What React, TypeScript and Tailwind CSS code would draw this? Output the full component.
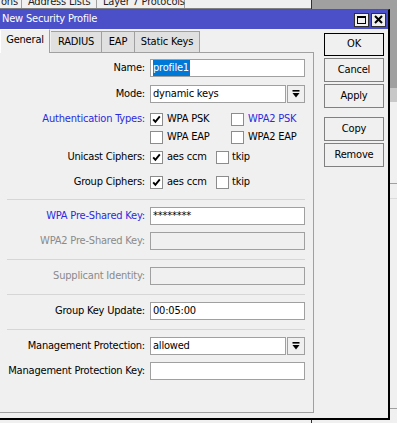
import React from 'react';

const labelCls = "w-[146px] shrink-0 text-right whitespace-nowrap";

const Check: React.FC<{on?: boolean}> = ({on}) => (
  <div className="w-[13px] h-[13px] shrink-0 border border-[#8c8c8c] bg-white flex items-center justify-center">
    {on && (
      <svg width="9" height="9" viewBox="0 0 9 9">
        <polyline points="1.2,4.3 3.4,6.8 7.8,1.3" fill="none" stroke="#000" strokeWidth="1.9" />
      </svg>
    )}
  </div>
);

const DropArrow = () => (
  <svg width="8" height="8" viewBox="0 0 8 8">
    <rect x="0.5" y="0" width="7" height="1.6" fill="#000" />
    <polygon points="0.5,3 7.5,3 4,7.5" fill="#000" />
  </svg>
);

const Row: React.FC<{label: string; color?: string; mt: string; children: React.ReactNode}> = ({label, color, mt, children}) => (
  <div className={`flex items-center h-[18px] ${mt}`}>
    <div className={`${labelCls} ${color ?? ""}`}>{label}</div>
    <div className="ml-[5px] flex items-center">{children}</div>
  </div>
);

const TextBox: React.FC<{value?: React.ReactNode; disabled?: boolean; w?: string}> = ({value, disabled, w}) => (
  <div className={`${w ?? "w-[155px]"} h-[18px] border border-[#a0a0a0] flex items-center pl-[2px] whitespace-nowrap ${disabled ? "bg-[#f0f0f0]" : "bg-white"}`}>
    {value}
  </div>
);

const Select: React.FC<{value: string}> = ({value}) => (
  <div className="flex">
    <TextBox value={value} w="w-[136px]" />
    <div className="ml-px w-[18px] h-[18px] border border-[#a0a0a0] bg-[#f0f0f0] flex items-center justify-center">
      <DropArrow />
    </div>
  </div>
);

const Sep: React.FC<{mt: string}> = ({mt}) => (
  <div className={`ml-[8px] w-[298px] border-t border-[#d6d6d6] ${mt}`} />
);

const Btn: React.FC<{label: string; mt: string; main?: boolean}> = ({label, mt, main}) => (
  <div className={`w-[60px] flex items-center justify-center ${mt} ${main ? "h-[23px] border border-black" : "h-[24px] border border-[#808080]"}`}>
    {label}
  </div>
);

export default function App() {
  return (
    <div className="relative w-[397px] h-[423px] overflow-hidden bg-[#f0f0f0] text-[11px] tracking-[-0.2px] text-black font-['DejaVu_Sans_Condensed','DejaVu_Sans',sans-serif]">
      {/* window behind */}
      <div className="flex h-full">
        <div className="w-[311px] shrink-0">
          <div className="flex h-[9px] overflow-hidden border-b border-[#808080] text-[#222]">
            <div className="w-[22px] border-r border-[#a0a0a0] leading-[11px] -mt-[4px] pl-[1px]">ons</div>
            <div className="w-[75px] border-r border-[#a0a0a0] leading-[11px] -mt-[4px] pl-[6px]">Address Lists</div>
            <div className="w-[88px] border-r border-[#a0a0a0] leading-[11px] -mt-[4px] pl-[6px] whitespace-nowrap">Layer 7 Protocols</div>
          </div>
        </div>
        <div className="flex-1 flex flex-col border-l border-[#303030]">
          <div className="h-[88px] bg-[#a0a0a0]" />
          <div className="h-[14px] bg-[#c8c8c8]" />
          <div className="h-[81px]" />
          <div className="border-t border-[#a0a0a0] h-[15px]" />
          <div className="border-t border-[#dcdcdc] h-[210px]" />
          <div className="border-t border-[#a0a0a0] flex-1" />
        </div>
      </div>

      {/* dialog window */}
      <div className="absolute left-[-4px] top-[9px] w-[394px] h-[411px] bg-[#f0f0f0] border-t border-[#5a5a5a] border-r-2 border-b-2 border-r-black border-b-black flex flex-col">
        <div className="h-[19px] bg-[#4b4fc8] flex items-center justify-between pl-[6px] pr-[2px]">
          <span className="text-white text-[11px]">New Security Profile</span>
          <div className="flex gap-[2px]">
            <div className="w-[15px] h-[14px] bg-[#f0f0f0] border border-[#303030] flex items-center justify-center">
              <div className="w-[9px] h-[8px] border border-black border-t-2" />
            </div>
            <div className="w-[15px] h-[14px] bg-[#f0f0f0] border border-[#303030] flex items-center justify-center">
              <svg width="9" height="9" viewBox="0 0 9 9">
                <path d="M1 1 L8 8 M8 1 L1 8" stroke="#000" strokeWidth="2" />
              </svg>
            </div>
          </div>
        </div>

        <div className="flex flex-1">
          {/* tabs + panel */}
          <div className="ml-[2px] w-[316px] flex flex-col">
            <div className="flex items-end h-[23px] ml-[2px]">
              <div className="relative z-10 w-[50px] h-[24px] -mb-px bg-[#f0f0f0] border-t border-l border-r border-t-white border-l-white border-r-[#a0a0a0] flex items-center justify-center pb-[2px]">General</div>
              <div className="ml-px w-[51px] h-[21px] bg-[#e0e0e0] border-t border-r border-[#a0a0a0] flex items-center justify-center">RADIUS</div>
              <div className="w-[33px] h-[21px] bg-[#e0e0e0] border-t border-r border-[#a0a0a0] flex items-center justify-center">EAP</div>
              <div className="w-[65px] h-[21px] bg-[#e0e0e0] border-t border-r border-[#a0a0a0] flex items-center justify-center">Static Keys</div>
            </div>
            <div className="h-[361px] border border-[#a0a0a0] flex flex-col">
              <Row label="Name:" mt="mt-[6px]">
                <TextBox value={<span className="bg-[#0078d7] text-white pr-[1px]">profile1</span>} />
              </Row>
              <Row label="Mode:" mt="mt-[8px]">
                <Select value="dynamic keys" />
              </Row>
              <Row label="Authentication Types:" color="text-[#2b2bde]" mt="mt-[7px]">
                <div className="flex items-center w-[81px]"><Check on /><span className="ml-[4px]">WPA PSK</span></div>
                <div className="flex items-center"><Check /><span className="ml-[4px] text-[#2b2bde]">WPA2 PSK</span></div>
              </Row>
              <Row label="" mt="mt-0">
                <div className="flex items-center w-[81px]"><Check /><span className="ml-[4px]">WPA EAP</span></div>
                <div className="flex items-center"><Check /><span className="ml-[4px]">WPA2 EAP</span></div>
              </Row>
              <Row label="Unicast Ciphers:" mt="mt-[2px]">
                <div className="flex items-center w-[66px]"><Check on /><span className="ml-[4px]">aes ccm</span></div>
                <div className="flex items-center"><Check /><span className="ml-[3px]">tkip</span></div>
              </Row>
              <Row label="Group Ciphers:" mt="mt-[7px]">
                <div className="flex items-center w-[66px]"><Check on /><span className="ml-[4px]">aes ccm</span></div>
                <div className="flex items-center"><Check /><span className="ml-[3px]">tkip</span></div>
              </Row>
              <Sep mt="mt-[8px]" />
              <Row label="WPA Pre-Shared Key:" color="text-[#2b2bde]" mt="mt-[7px]">
                <TextBox value="********" />
              </Row>
              <Row label="WPA2 Pre-Shared Key:" color="text-[#8a8a8a]" mt="mt-[7px]">
                <TextBox disabled />
              </Row>
              <Sep mt="mt-[9px]" />
              <Row label="Supplicant Identity:" color="text-[#8a8a8a]" mt="mt-[7px]">
                <TextBox disabled />
              </Row>
              <Sep mt="mt-[9px]" />
              <Row label="Group Key Update:" mt="mt-[7px]">
                <TextBox value="00:05:00" />
              </Row>
              <Sep mt="mt-[9px]" />
              <Row label="Management Protection:" mt="mt-[7px]">
                <Select value="allowed" />
              </Row>
              <Row label="Management Protection Key:" mt="mt-[7px]">
                <TextBox />
              </Row>
            </div>
          </div>

          {/* buttons */}
          <div className="ml-[10px] flex flex-col">
            <Btn label="OK" mt="mt-[4px]" main />
            <Btn label="Cancel" mt="mt-[2px]" />
            <Btn label="Apply" mt="mt-[2px]" />
            <Btn label="Copy" mt="mt-[9px]" />
            <Btn label="Remove" mt="mt-[2px]" />
          </div>
        </div>
      </div>
    </div>
  );
}
